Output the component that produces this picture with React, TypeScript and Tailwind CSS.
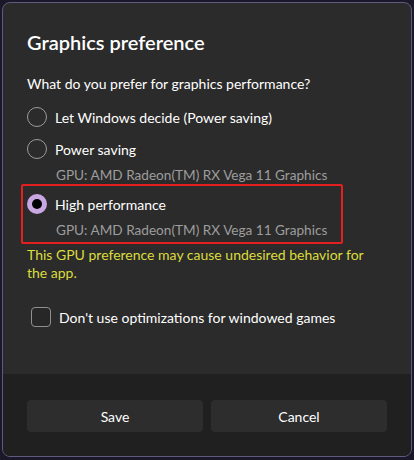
import { useState } from "react";

const font = { fontFamily: '"Segoe UI", Lato, "Noto Sans", sans-serif' };

function Radio({ checked }: { checked?: boolean }) {
  if (checked) {
    return (
      <span className="flex h-5 w-5 shrink-0 items-center justify-center rounded-full bg-[#c9a7e3]">
        <span className="h-[10px] w-[10px] rounded-full bg-black" />
      </span>
    );
  }
  return <span className="h-5 w-5 shrink-0 rounded-full border border-[#9b9b9b]" />;
}

export default function App() {
  const [choice, setChoice] = useState(2);
  const [noOpt, setNoOpt] = useState(false);

  const gpu = "GPU: AMD Radeon(TM) RX Vega 11 Graphics";

  return (
    <div className="h-[460px] w-[414px] bg-[#1b1829] p-[2px]" style={font}>
      <div className="flex h-[455px] flex-col overflow-hidden rounded-lg border border-[#625a7e] bg-[#2b2b2b] text-white">
        {/* Body */}
        <div className="flex flex-1 flex-col pl-6 pt-[25px]">
          <h1 className="text-[20px] font-semibold leading-[28px]">Graphics preference</h1>
          <p className="mt-[18px] text-[14px] leading-5">What do you prefer for graphics performance?</p>

          <button className="mt-[7px] flex h-8 items-center gap-2 text-left text-[14px]" onClick={() => setChoice(0)}>
            <Radio checked={choice === 0} />
            <span>Let Windows decide (Power saving)</span>
          </button>
          <button className="flex h-8 items-center gap-2 text-left text-[14px]" onClick={() => setChoice(1)}>
            <Radio checked={choice === 1} />
            <span>Power saving</span>
          </button>
          <p className="pl-[29px] text-[13.6px] leading-5 text-[#9d9d9d]">{gpu}</p>

          <div className="-ml-[6px] -mt-[1px] w-[322px] rounded-[2px] border-2 border-[#e3201f] pl-1 pt-[2px] pb-[2px]">
            <button className="flex h-8 items-center gap-2 text-left text-[14px]" onClick={() => setChoice(2)}>
              <Radio checked={choice === 2} />
              <span>High performance</span>
            </button>
            <p className="pl-[29px] text-[13.6px] leading-5 text-[#9d9d9d]">{gpu}</p>
          </div>

          <p className="mt-[2px] text-[14px] leading-[18px] text-[#dcdc3c]">
            This GPU preference may cause undesired behavior for
            <br />
            the app.
          </p>

          <button className="ml-1 mt-[19px] flex h-8 items-center gap-2 text-left text-[14px]" onClick={() => setNoOpt(!noOpt)}>
            <span className="flex h-5 w-5 shrink-0 items-center justify-center rounded-[4px] border border-[#8f8f8f] bg-[#272727]">
              {noOpt && <span className="text-[12px] leading-none">✓</span>}
            </span>
            <span>Don't use optimizations for windowed games</span>
          </button>
        </div>

        {/* Footer */}
        <div className="flex h-[82px] shrink-0 gap-2 bg-[#202020] px-6 pt-[26px]">
          <button className="h-8 w-[176px] rounded-[4px] bg-[#2d2d2d] text-[14px]">Save</button>
          <button className="h-8 w-[176px] rounded-[4px] bg-[#2d2d2d] text-[14px]">Cancel</button>
        </div>
      </div>
    </div>
  );
}
